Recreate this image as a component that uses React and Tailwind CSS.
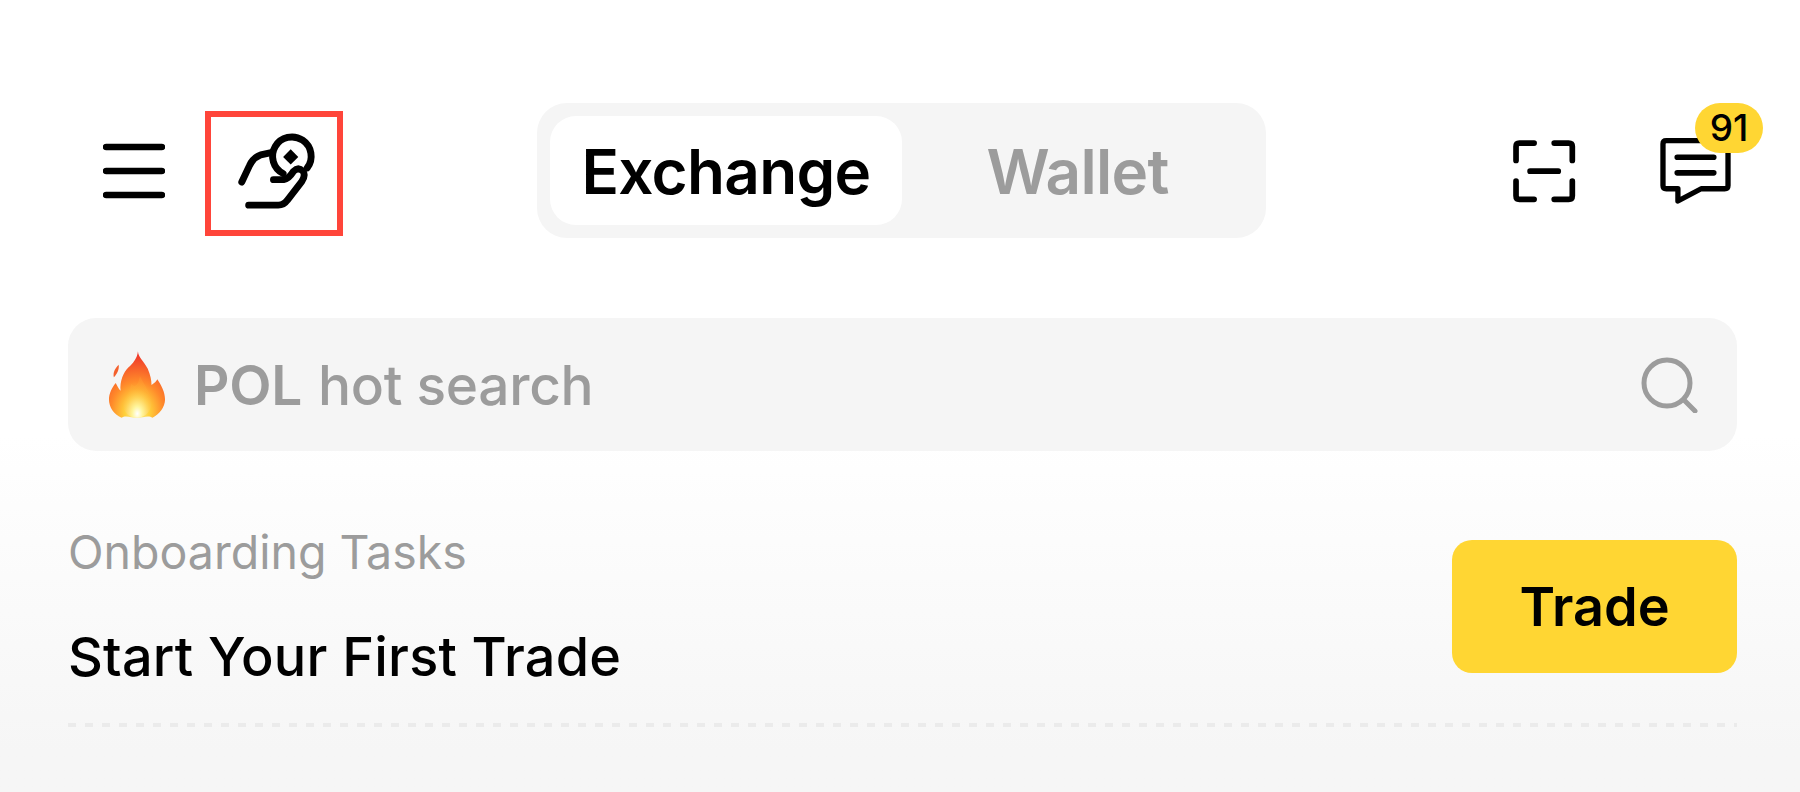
const sans = "font-['Inter','Liberation_Sans',sans-serif]";

function Flame() {
  return (
    <svg width="58" height="68" viewBox="0 0 60 70" fill="none">
      <defs>
        <radialGradient id="flameOuter" cx="50%" cy="92%" r="85%">
          <stop offset="0" stopColor="#fff6b0" />
          <stop offset="0.25" stopColor="#ffd23c" />
          <stop offset="0.55" stopColor="#ff8a2a" />
          <stop offset="1" stopColor="#f03a2a" />
        </radialGradient>
        <radialGradient id="flameCore" cx="50%" cy="90%" r="60%">
          <stop offset="0" stopColor="#ffffff" />
          <stop offset="0.3" stopColor="#fff59a" />
          <stop offset="1" stopColor="#ffb53a" stopOpacity="0.2" />
        </radialGradient>
      </defs>
      <path d="M31 0C31 6 37 10 41 18C44 25 45 30 45 35C48 33 50 31 51 29C55 35 59 42 59 50C59 58 53 65 46 69C42 66 36 69 30 69C24 69 18 66 14 69C6 65 1 58 1 50C1 44 4 38 8 33C10 37 11 39 13 41C12 31 16 22 21 17C26 12 30 8 31 0Z" fill="url(#flameOuter)" />
      <path d="M30 69C20 69 14 60 16 52C18 46 22 44 24 34C28 38 31 36 33 26C38 36 46 46 45 55C44 62 39 69 30 69Z" fill="url(#flameCore)" />
      <path d="M11 14C7 18 5 22 6 27C9 24 12 19 11 14Z" fill="#f4602c" />
    </svg>
  );
}

export default function App() {
  return (
    <div className={`${sans} w-[1800px] h-[792px] overflow-hidden bg-gradient-to-b from-white from-[55%] to-[#f6f6f6] to-[95%] pt-[103px]`}>
      <header className="flex items-center h-[135px]">
        <svg className="ml-[103px]" width="62" height="56" viewBox="0 0 62 56" fill="none" stroke="#000" strokeWidth="6.5" strokeLinecap="round">
          <path d="M3 4H59M3 28H59M3 52H59" />
        </svg>
        <div className="ml-[40px] mt-[5px] w-[138px] h-[125px] border-[6px] border-[#ff453a] flex items-center justify-center">
          <svg width="93" height="90" viewBox="450 110 270 260" fill="none" stroke="#000" strokeWidth="20" strokeLinecap="round" strokeLinejoin="round" className="-mt-[7px]">
            <path d="M610 250A56 56 0 1 1 680 234" />
            <path d="M490 275L512 228Q522 205 545 196L572 190" />
            <path d="M582 268H612Q626 266 640 244Q654 230 668 244Q676 256 664 274L622 328Q612 342 596 342H510" />
            <path d="M632 180L654 202L632 224L610 202Z" fill="#000" stroke="none" />
          </svg>
        </div>
        <div className="ml-[194px] w-[729px] h-[135px] rounded-[30px] bg-[#f5f5f5] flex items-center pl-[13px]">
          <div className="w-[352px] h-[109px] pt-[2px] rounded-[26px] bg-white flex items-center justify-center text-[62px] font-semibold tracking-[-0.7px] text-black">Exchange</div>
          <div className="flex-1 pr-[13px] pt-[2px] text-center text-[62px] font-semibold tracking-[-0.7px] text-[#9c9c9c]">Wallet</div>
        </div>
        <svg className="ml-[244px]" width="67" height="67" viewBox="90 140 200 200" fill="none" stroke="#000" strokeWidth="17" strokeLinecap="round" strokeLinejoin="round">
          <path d="M108 210V168Q108 158 118 158H162M222 158H265Q276 158 276 168V210M108 272V315Q108 326 118 326H162M222 326H265Q276 326 276 315V272M150 242H234" />
        </svg>
        <div className="relative ml-[80px]">
          <svg width="77" height="73" viewBox="530 130 230 220" fill="none" stroke="#000" strokeWidth="16" strokeLinecap="round" strokeLinejoin="round" className="block">
            <path d="M690 150H557Q547 150 547 160V285Q547 295 557 295H592V332L662 295H733Q743 295 743 285V180" />
            <path d="M590 200H700M590 247H700" strokeWidth="17" />
          </svg>
          <span className="absolute left-[38px] -top-[31px] w-[68px] h-[50px] rounded-full bg-[#ffd633] flex items-center justify-center text-[37px] font-medium text-black">91</span>
        </div>
      </header>

      <div className="mt-[80px] ml-[68px] mr-[63px] h-[133px] rounded-[28px] bg-[#f5f5f5] flex items-center pl-[40px] pr-[38px]">
        <Flame />
        <span className="ml-[28px] pt-[2px] text-[55px] tracking-[-0.3px] text-[#9c9c9c] font-semibold">POL</span>
        <span className="ml-[16px] pt-[2px] text-[55px] tracking-[-0.3px] text-[#9c9c9c] font-medium">hot search</span>
        <svg className="ml-auto" width="58" height="56" viewBox="0 0 58 56" fill="none" stroke="#9c9c9c" strokeWidth="5" strokeLinecap="round">
          <circle cx="26" cy="26" r="23" />
          <path d="M43 43L54 54" />
        </svg>
      </div>

      <div className="mt-[73px] ml-[68px] mr-[63px] flex items-center justify-between">
        <div>
          <div className="text-[46.5px] leading-[56px] text-[#9c9c9c]">Onboarding Tasks</div>
          <div className="mt-[46px] text-[54px] leading-[62px] font-medium tracking-[0.2px] text-black">Start Your First Trade</div>
        </div>
        <button className="w-[285px] h-[133px] rounded-[20px] bg-[#ffd633] text-[54px] font-semibold text-black">Trade</button>
      </div>
      <div className="mt-[35px] ml-[68px] mr-[63px] h-[4px] bg-[repeating-linear-gradient(90deg,#ebebeb_0_8px,transparent_8px_17px)]" />
    </div>
  );
}
